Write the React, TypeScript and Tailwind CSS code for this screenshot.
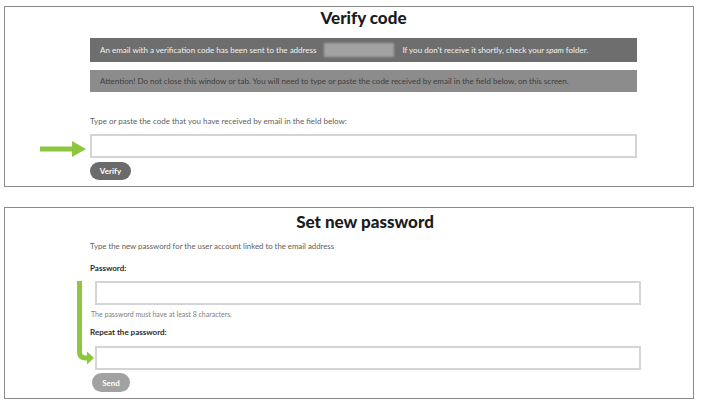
import React from 'react';

const font = { fontFamily: 'Lato, "Open Sans", sans-serif' };

function GreenArrow() {
  return (
    <svg className="absolute left-[40px] top-[141px]" width="47" height="16" viewBox="0 0 47 16">
      <rect x="0" y="5.5" width="33" height="5" fill="#8dc63f" />
      <polygon points="32,0 46,8 32,16" fill="#8dc63f" />
    </svg>
  );
}

function BentArrow() {
  return (
    <svg className="absolute left-[70px] top-[279px]" width="28" height="92" viewBox="0 0 28 92">
      <path d="M9.5 2 V73 Q9.5 79 15.5 79 H18" fill="none" stroke="#8dc63f" strokeWidth="5" />
      <polygon points="17,72.5 24,79 17,85.5" fill="#8dc63f" />
    </svg>
  );
}

export default function App() {
  return (
    <div className="relative w-[701px] h-[405px] bg-white overflow-hidden" style={font}>
      {/* verify code */}
      <div className="ml-[4px] mt-[6px] w-[690px] h-[181px] border border-[#8a8a8a] pt-[2px] pl-[85px]">
        <h1 className="w-[547px] text-center text-[17px] leading-[18px] font-black text-[#1c1c1c]">Verify code</h1>
        <div className="mt-[11px] w-[547px] h-[24px] bg-[#6e6e6e] px-[10px] flex items-center text-[8px] text-[#f2f2f2] whitespace-nowrap">
          <span>An email with a verification code has been sent to the address</span>
          <span className="mx-[8px] inline-block w-[70px] h-[14px] bg-[#a3a3a3] blur-[1px]" />
          <span>If you don't receive it shortly, check your <i>spam</i> folder.</span>
        </div>
        <div className="mt-[8px] w-[547px] h-[22px] bg-[#8c8c8c] px-[10px] flex items-center text-[8px] text-[#3e3e3e] whitespace-nowrap">
          Attention! Do not close this window or tab. You will need to type or paste the code received by email in the field below, on this screen.
        </div>
        <p className="mt-[23px] text-[8px] leading-[12px] text-[#606060]">
          Type or paste the code that you have received by email in the field below:
        </p>
        <input className="mt-[7px] block w-[547px] h-[24px] border-2 border-[#d4d4d4] outline-none" />
        <button className="mt-[4px] block w-[41px] h-[18px] rounded-full bg-[#6b6b6b] text-white text-[8px] font-bold">Verify</button>
      </div>

      {/* set new password */}
      <div className="ml-[4px] mt-[20px] w-[690px] h-[192px] border border-[#8a8a8a] pt-[5px] pl-[85px]">
        <h1 className="w-[550px] text-center text-[17px] leading-[18px] font-black text-[#1c1c1c]">Set new password</h1>
        <p className="mt-[9px] text-[7.8px] leading-[12px] text-[#606060]">
          Type the new password for the user account linked to the email address
        </p>
        <p className="mt-[10px] text-[8px] leading-[12px] font-bold text-[#2a2a2a]">Password:</p>
        <input type="password" className="mt-[7px] ml-[5px] block w-[546px] h-[24px] border-2 border-[#d4d4d4] outline-none" />
        <p className="mt-[3px] ml-[1px] text-[7px] leading-[12px] text-[#808080]">
          The password must have at least 8 characters.
        </p>
        <p className="mt-[6px] text-[8px] leading-[12px] font-bold text-[#2a2a2a]">Repeat the password:</p>
        <input type="password" className="mt-[8px] ml-[5px] block w-[546px] h-[24px] border-2 border-[#d4d4d4] outline-none" />
        <button className="mt-[3px] ml-[2px] block w-[38px] h-[19px] rounded-full bg-[#a2a2a2] text-white text-[8px] font-bold">Send</button>
      </div>

      <GreenArrow />
      <BentArrow />
    </div>
  );
}
